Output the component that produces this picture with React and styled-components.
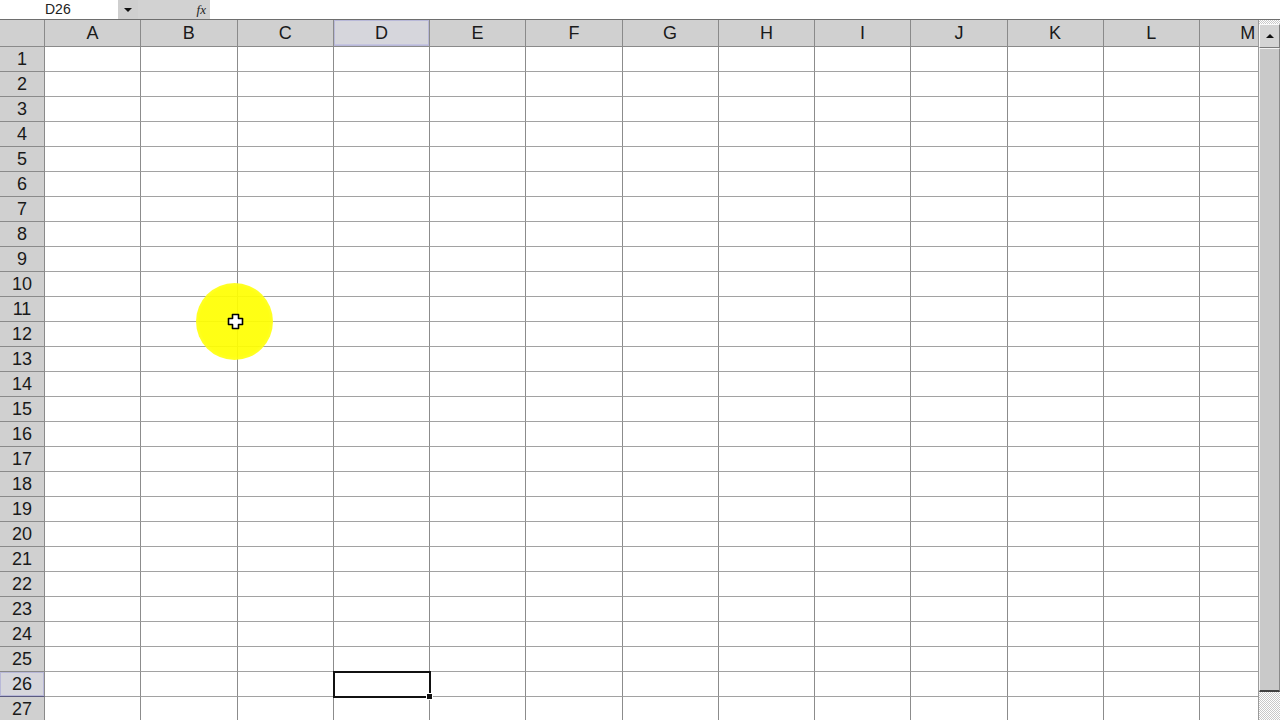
import React from "react";
import styled, { createGlobalStyle, css } from "styled-components";

const Global = createGlobalStyle`
  html, body { margin: 0; padding: 0; background: #fff; }
  body { font-family: "Liberation Sans", Arial, sans-serif; overflow: hidden; }
`;

const Window = styled.div`
  width: 1280px;
  height: 720px;
  overflow: hidden;
  display: flex;
  flex-direction: column;
  position: relative;
  background: #fff;
`;

const FormulaBar = styled.div`
  height: 20px;
  flex: none;
  display: flex;
  box-sizing: border-box;
  border-bottom: 1px solid #6e6e6e;
`;

const NameBox = styled.div`
  width: 118px;
  background: #fff;
  font-size: 14px;
  color: #222;
  padding-left: 45px;
  box-sizing: border-box;
  line-height: 18px;
`;

const DropButton = styled.div`
  width: 20px;
  background: #cfcfcf;
  display: flex;
  align-items: center;
  justify-content: center;
  &::before {
    content: "";
    border-left: 4px solid transparent;
    border-right: 4px solid transparent;
    border-top: 4px solid #111;
  }
`;

const FxArea = styled.div`
  width: 72px;
  background: #d2d2d2;
  display: flex;
  justify-content: flex-end;
  align-items: center;
  padding-right: 4px;
  box-sizing: border-box;
  font-family: "Liberation Serif", "Times New Roman", serif;
  font-style: italic;
  font-size: 13px;
  color: #222;
`;

const FormulaInput = styled.div`
  flex: 1;
  background: #fff;
`;

const Body = styled.div`
  flex: 1;
  display: flex;
  min-height: 0;
`;

const Sheet = styled.div`
  flex: 1;
  overflow: hidden;
  display: grid;
  grid-template-columns: 45px repeat(13, 96.25px);
  grid-template-rows: 27px;
  grid-auto-rows: 25px;
  align-content: start;
`;

const headerBase = css`
  box-sizing: border-box;
  background: #d0d0d0;
  color: #1a1a1a;
  font-size: 18px;
  display: flex;
  align-items: center;
  justify-content: center;
  border-right: 1px solid #8a8a8a;
  border-bottom: 1px solid #8a8a8a;
`;

const Corner = styled.div`
  ${headerBase}
`;

const ColHeader = styled.div`
  ${headerBase}
  ${(p) =>
    p.$active &&
    css`
      background: #d6d6dc;
      box-shadow: inset 0 0 0 1px #b8b8d8, inset 0 -2px 0 #c4c4e0;
    `}
`;

const RowHeader = styled.div`
  ${headerBase}
  border-right: 1px solid #8a8a8a;
  padding-top: 1px;
  ${(p) =>
    p.$active &&
    css`
      background: #d6d6dc;
      box-shadow: inset 0 0 0 1px #b8b8d8;
      border-bottom: 1px solid #5a5a80;
    `}
`;

const Cell = styled.div`
  box-sizing: border-box;
  border-right: 1px solid #8c8c8c;
  border-bottom: 1px solid #a2a2a2;
  position: relative;
  ${(p) =>
    p.$selected &&
    css`
      &::after {
        content: "";
        position: absolute;
        left: -1px;
        top: -1px;
        right: -2px;
        bottom: -2px;
        border: 2px solid #111;
        z-index: 2;
      }
      &::before {
        content: "";
        position: absolute;
        right: -4px;
        bottom: -4px;
        width: 5px;
        height: 5px;
        background: #111;
        border: 1px solid #fff;
        z-index: 3;
      }
    `}
`;

const Scrollbar = styled.div`
  width: 22px;
  flex: none;
  display: flex;
  flex-direction: column;
  box-sizing: border-box;
  background-color: #fff;
  background-image: repeating-conic-gradient(#c8c8c8 0 25%, #fff 0 50%);
  background-size: 2px 2px;
  border-left: 1px solid #9a9a9a;
`;

const ArrowButton = styled.div`
  height: 24px;
  margin-top: 4px;
  flex: none;
  background: #d4d4d4;
  box-sizing: border-box;
  border-top: 1px solid #fafafa;
  border-left: 1px solid #fafafa;
  border-right: 1px solid #7a7a7a;
  border-bottom: 1px solid #7a7a7a;
  display: flex;
  align-items: center;
  justify-content: center;
  &::before {
    content: "";
    border-left: 4px solid transparent;
    border-right: 4px solid transparent;
    border-bottom: 4px solid #111;
  }
`;

const Thumb = styled.div`
  height: 644px;
  flex: none;
  background: #c9c9c9;
  box-sizing: border-box;
  border-top: 1px solid #f2f2f2;
  border-left: 1px solid #f2f2f2;
  border-right: 1px solid #8a8a8a;
  border-bottom: 2px solid #404040;
`;

const Highlight = styled.div`
  position: absolute;
  left: 196px;
  top: 283px;
  width: 77px;
  height: 77px;
  border-radius: 50%;
  background: radial-gradient(circle, #ffff00 0 64%, #ffff14 70%, rgba(255,255,0,0.9) 100%);
  opacity: 0.92;
  pointer-events: none;
  z-index: 5;
`;

const Cursor = styled.svg`
  position: absolute;
  left: 227px;
  top: 313px;
  width: 17px;
  height: 17px;
  z-index: 6;
  pointer-events: none;
`;

const cols = ["A", "B", "C", "D", "E", "F", "G", "H", "I", "J", "K", "L", "M"];
const rows = Array.from({ length: 28 }, (_, i) => i + 1);

export default function App() {
  return (
    <Window>
      <Global />
      <FormulaBar>
        <NameBox>D26</NameBox>
        <DropButton />
        <FxArea>fx</FxArea>
        <FormulaInput />
      </FormulaBar>
      <Body>
        <Sheet>
          <Corner />
          {cols.map((c) => (
            <ColHeader key={c} $active={c === "D"}>
              {c}
            </ColHeader>
          ))}
          {rows.map((r) => (
            <React.Fragment key={r}>
              <RowHeader $active={r === 26}>{r}</RowHeader>
              {cols.map((c) => (
                <Cell key={c} $selected={r === 26 && c === "D"} />
              ))}
            </React.Fragment>
          ))}
        </Sheet>
        <Scrollbar>
          <ArrowButton />
          <Thumb />
        </Scrollbar>
      </Body>
      <Highlight />
      <Cursor viewBox="0 0 17 17">
        <path
          d="M5.5 1.5 H11.5 V5.5 H15.5 V11.5 H11.5 V15.5 H5.5 V11.5 H1.5 V5.5 H5.5 Z"
          fill="#fff"
          stroke="#000"
          strokeWidth="1.6"
          strokeLinejoin="round"
        />
      </Cursor>
    </Window>
  );
}
